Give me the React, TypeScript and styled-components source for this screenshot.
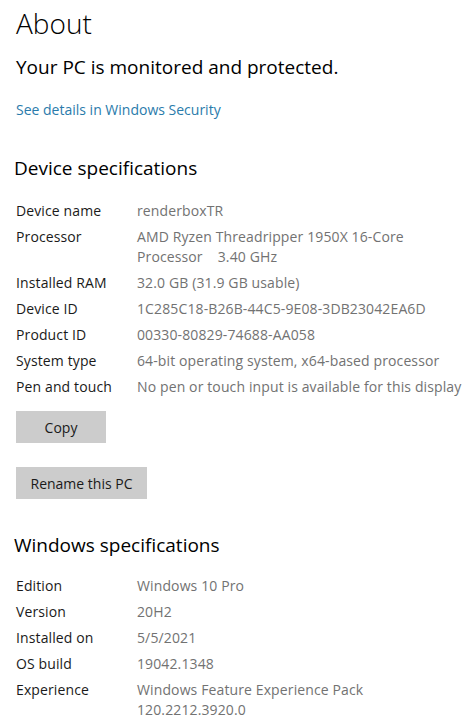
import * as React from "react";
import styled, { createGlobalStyle } from "styled-components";

const Global = createGlobalStyle`
    html, body {
        margin: 0;
        padding: 0;
        background: #ffffff;
    }
    body {
        font-family: "Open Sans", "Noto Sans", sans-serif;
        color: #000000;
    }
`;

const Page = styled.div`
    width: 472px;
    height: 726px;
    overflow: hidden;
    padding: 4px 0 0 16px;
    box-sizing: border-box;
`;

const PageTitle = styled.h1`
    margin: 0;
    font-size: 28px;
    font-weight: 300;
    line-height: 38px;
`;

const Status = styled.div`
    margin-top: 12px;
    font-size: 19px;
    line-height: 26px;
`;

const SecurityLink = styled.a`
    display: block;
    margin-top: 20px;
    font-size: 14px;
    line-height: 20px;
    color: #2a7bab;
    text-decoration: none;
`;

const SectionTitle = styled.h2<{ $top: number }>`
    margin: ${(p) => p.$top}px 0 0 -2px;
    font-size: 19px;
    font-weight: 400;
    line-height: 28px;
`;

const Specs = styled.div<{ $top: number }>`
    display: grid;
    grid-template-columns: 121px 1fr;
    row-gap: 6px;
    margin-top: ${(p) => p.$top}px;
    font-size: 14px;
    line-height: 20px;
    letter-spacing: 0.12px;
`;

const Label = styled.div`
    color: #1a1a1a;
`;

const Value = styled.div`
    color: #727272;
`;

const Button = styled.button<{ $width: number; $top: number }>`
    display: block;
    width: ${(p) => p.$width}px;
    height: 32px;
    margin-top: ${(p) => p.$top}px;
    border: none;
    background: #cccccc;
    font-family: inherit;
    font-size: 14px;
    color: #1a1a1a;
    padding: 0;
`;

type Spec = { label: string; value: React.ReactNode };

const device: Spec[] = [
    { label: "Device name", value: "renderboxTR" },
    {
        label: "Processor",
        value: (
            <>
                AMD Ryzen Threadripper 1950X 16-Core
                <br />
                Processor&nbsp;&nbsp;&nbsp; 3.40 GHz
            </>
        ),
    },
    { label: "Installed RAM", value: "32.0 GB (31.9 GB usable)" },
    { label: "Device ID", value: "1C285C18-B26B-44C5-9E08-3DB23042EA6D" },
    { label: "Product ID", value: "00330-80829-74688-AA058" },
    { label: "System type", value: "64-bit operating system, x64-based processor" },
    { label: "Pen and touch", value: "No pen or touch input is available for this display" },
];

const windows: Spec[] = [
    { label: "Edition", value: "Windows 10 Pro" },
    { label: "Version", value: "20H2" },
    { label: "Installed on", value: "5/5/2021" },
    { label: "OS build", value: "19042.1348" },
    {
        label: "Experience",
        value: (
            <>
                Windows Feature Experience Pack
                <br />
                120.2212.3920.0
            </>
        ),
    },
];

const SpecList = ({ items, top }: { items: Spec[]; top: number }) => (
    <Specs $top={top}>
        {items.map((s) => (
            <React.Fragment key={s.label}>
                <Label>{s.label}</Label>
                <Value>{s.value}</Value>
            </React.Fragment>
        ))}
    </Specs>
);

const App = () => {
    return (
        <Page>
            <Global />
            <PageTitle>About</PageTitle>
            <Status>Your PC is monitored and protected.</Status>
            <SecurityLink href="#">See details in Windows Security</SecurityLink>

            <SectionTitle $top={34}>Device specifications</SectionTitle>
            <SpecList items={device} top={19} />
            <Button $width={90} $top={14}>Copy</Button>
            <Button $width={131} $top={24}>Rename this PC</Button>

            <SectionTitle $top={32}>Windows specifications</SectionTitle>
            <SpecList items={windows} top={17} />
        </Page>
    );
};

export default App;
